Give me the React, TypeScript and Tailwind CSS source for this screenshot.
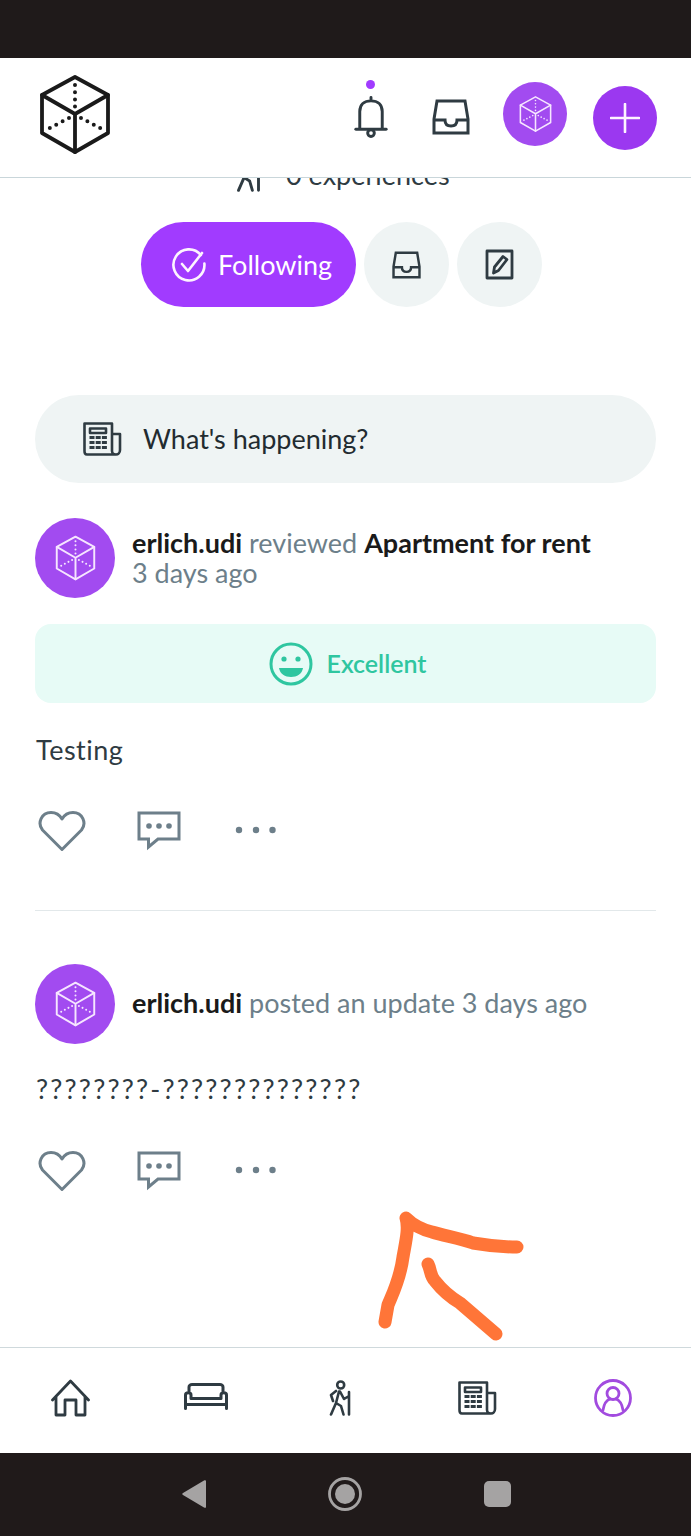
import React from "react";

const Cube = ({ className, stroke, sw = 4 }: { className: string; stroke: string; sw?: number }) => (
  <svg viewBox="0 0 72 81" className={className} fill="none" stroke={stroke} strokeWidth={sw} strokeLinejoin="round" strokeLinecap="round">
    <path d="M36 3 69 21V59L36 78 3 59V21Z" />
    <path d="M3 21 36 40 69 21M36 40V78" />
    <path d="M36 11V35M30 44 5 57M42 44 67 57" strokeDasharray="0 7.2" strokeWidth={sw * 1.05} />
  </svg>
);

const Bell = ({ className }: { className: string }) => (
  <svg viewBox="0 0 34 44" className={className} fill="none" stroke="#2f3b42" strokeWidth="3" strokeLinecap="round" strokeLinejoin="round">
    <path d="M17 2.500V5M5.500 34V17C5.500 10 10 6 17 6s11.500 4 11.500 11V34" />
    <path d="M1.500 35H32.500" />
    <circle cx="17" cy="39" r="3.400" />
  </svg>
);

const Inbox = ({ className, sw = 3 }: { className: string; sw?: number }) => (
  <svg viewBox="0 0 38 36" className={className} fill="none" stroke="#2f3b42" strokeWidth={sw} strokeLinejoin="miter">
    <path d="M5 2H33L36 20V34H2V20Z" />
    <path d="M2 21H13C13 25 15 27 19 27s6-2 6-6H36" />
  </svg>
);

const Pencil = ({ className }: { className: string }) => (
  <svg viewBox="0 0 29 31" className={className} fill="none" stroke="#2f3b42" strokeWidth="2.800" strokeLinejoin="round">
    <rect x="2" y="2" width="25" height="27" />
    <path d="M8.500 24 9.500 18 18 7.500 22 10.500 13.500 21.500Z" />
  </svg>
);

const News = ({ className }: { className: string }) => (
  <svg viewBox="0 0 39 34" className={className} fill="none" stroke="#2f3b42" strokeWidth="2.600" strokeLinejoin="round">
    <path d="M29 12H37V28C37 31 35 32.500 33 32.500H4C2 32.500 1.500 31 1.500 29V1.500H29V29C29 31 31 32.500 33 32.500" />
    <rect x="7" y="6.500" width="16" height="4.500" />
    <path d="M6.500 15.500H24M6.500 20.500H24M6.500 25.500H24" strokeWidth="3" strokeDasharray="5 1.200" />
  </svg>
);

const Hiker = ({ className }: { className: string }) => (
  <svg viewBox="0 0 24 36" className={className} fill="none" stroke="#2f3b42" strokeWidth="2.600" strokeLinecap="round" strokeLinejoin="round">
    <circle cx="12.700" cy="5" r="3.500" />
    <path d="M21 12V34.500M11 11.500 8 23 13 26 15.500 34.500M8 23 3 34.500M12 11.500 16 19 21 16M8 11 3 15 5 21" />
  </svg>
);

const Heart = () => (
  <svg viewBox="0 0 48 42" className="h-[42px] w-[48px]" fill="none" stroke="#6d7f8a" strokeWidth="3" strokeLinejoin="round">
    <path d="M24 39.500 4.500 20C-1 13 3.500 2.500 13 2.500 18 2.500 22 5.500 24 9 26 5.500 30 2.500 35 2.500 44.500 2.500 49 13 43.500 20Z" />
  </svg>
);

const Comment = () => (
  <svg viewBox="0 0 44 40" className="h-[40px] w-[44px]" fill="none">
    <path d="M2 2H42V28H21L11.500 36V28H2Z" stroke="#6d7f8a" strokeWidth="3" />
    <circle cx="12" cy="15" r="2.800" fill="#6d7f8a" />
    <circle cx="22" cy="15" r="2.800" fill="#6d7f8a" />
    <circle cx="32" cy="15" r="2.800" fill="#6d7f8a" />
  </svg>
);

const Dots = () => (
  <svg viewBox="0 0 42 8" className="mt-[-2px] h-[8px] w-[42px]" fill="#6d7f8a">
    <circle cx="4" cy="4" r="3.200" />
    <circle cx="21" cy="4" r="3.200" />
    <circle cx="37.500" cy="4" r="3.200" />
  </svg>
);

const Actions = () => (
  <div className="flex items-center">
    <Heart />
    <div className="ml-[51px]"><Comment /></div>
    <div className="ml-[54px]"><Dots /></div>
  </div>
);

const Avatar = () => (
  <div className="flex h-[80px] w-[80px] shrink-0 items-center justify-center rounded-full bg-[#a24bf0]">
    <Cube className="h-[46px] w-[41px]" stroke="#f6e6ff" sw={3.400} />
  </div>
);

export default function App() {
  return (
    <div className="relative flex h-[1536px] w-[691px] flex-col overflow-hidden bg-white font-['Lato','Noto_Sans',sans-serif] text-[27px]">
      <div className="h-[58px] shrink-0 bg-[#1f1a1a]" />

      <header className="flex h-[120px] shrink-0 items-start border-b border-[#c9d6da] bg-white pl-[39px] pr-[34px] pt-[16px]">
        <Cube className="h-[81px] w-[72px]" stroke="#1a1a1a" sw={3.800} />
        <div className="relative ml-auto mt-[8px] flex items-start">
          <div className="absolute left-[12px] top-[-2px] h-[9px] w-[9px] rounded-full bg-[#a13bff]" />
          <Bell className="mt-[13px] h-[43px] w-[34px]" />
          <Inbox className="ml-[44px] mt-[17px] h-[36px] w-[38px]" />
          <div className="ml-[33px] flex h-[64px] w-[64px] items-center justify-center rounded-full bg-[#a24bf0]">
            <Cube className="h-[38px] w-[33px]" stroke="#f6e6ff" sw={3.400} />
          </div>
          <div className="ml-[26px] mt-[4px] flex h-[64px] w-[64px] items-center justify-center rounded-full bg-[#9b38f0]">
            <svg viewBox="0 0 30 30" className="h-[30px] w-[30px]" stroke="#fdf4ff" strokeWidth="2.600" strokeLinecap="round">
              <path d="M15 1V29M1 15H29" />
            </svg>
          </div>
        </div>
      </header>

      <main className="flex-1 overflow-hidden">
        <div className="mt-[-19px] flex h-[32px] items-center pl-[235px] text-[#2f3b42]">
          <Hiker className="mt-[-6px] h-[40px] w-[27px]" />
          <span className="ml-[24px] leading-[32px]">0 experiences</span>
        </div>

        <div className="mt-[31px] flex justify-center gap-[8px] pr-[8px]">
          <div className="flex h-[85px] w-[215px] items-center rounded-full bg-[#a13bff] pl-[30px] text-white">
            <svg viewBox="0 0 36 36" className="h-[36px] w-[36px]" fill="none" stroke="#fdf4ff" strokeWidth="2.600" strokeLinecap="round" strokeLinejoin="round">
              <path d="M29.900 8A15.500 15.500 0 1 0 33.400 16.600" />
              <path d="M11 17 17 24 31 6" />
            </svg>
            <span className="ml-[11px] mt-[1px]">Following</span>
          </div>
          <div className="flex h-[85px] w-[85px] items-center justify-center rounded-full bg-[#eff4f4]">
            <Inbox className="h-[28px] w-[29px]" sw={3.200} />
          </div>
          <div className="flex h-[85px] w-[85px] items-center justify-center rounded-full bg-[#eff4f4]">
            <Pencil className="h-[31px] w-[29px]" />
          </div>
        </div>

        <div className="px-[35px]">
          <div className="mt-[88px] flex h-[88px] items-center rounded-full bg-[#eff4f4] pl-[48px] text-[#222b30]">
            <News className="h-[34px] w-[39px]" />
            <span className="ml-[21px] mt-[1px]">What's happening?</span>
          </div>

          <div className="mt-[35px] flex items-center">
            <Avatar />
            <div className="ml-[17px] leading-[30px] text-[#6d7f8a]">
              <div>
                <span className="font-bold text-[#1a1a1a]">erlich.udi</span> reviewed{" "}
                <span className="font-bold text-[#1a1a1a]">Apartment for rent</span>
              </div>
              <div>3 days ago</div>
            </div>
          </div>

          <div className="mt-[26px] flex h-[79px] items-center justify-center rounded-[16px] bg-[#e7fbf6] pl-[5px]">
            <svg viewBox="0 0 44 44" className="h-[44px] w-[44px]" fill="none">
              <circle cx="22" cy="22" r="20" stroke="#2fc6a0" strokeWidth="3" />
              <circle cx="15" cy="17" r="2.600" fill="#2fc6a0" />
              <circle cx="29" cy="17" r="2.600" fill="#2fc6a0" />
              <path d="M10 26H34C33 32 28 35 22 35S11 32 10 26Z" fill="#2fc6a0" />
            </svg>
            <span className="ml-[13px] text-[25px] font-semibold text-[#2fc6a0]">Excellent</span>
          </div>

          <div className="mt-[31px] pl-px leading-[32px] tracking-[0.5px] text-[#2f3b42]">Testing</div>

          <div className="mt-[44px] pl-[3px]"><Actions /></div>

          <div className="mt-[58px] h-px bg-[#e2e8ea]" />

          <div className="mt-[53px] flex items-center">
            <Avatar />
            <div className="ml-[17px] mt-[-2px] text-[#6d7f8a]">
              <span className="font-bold text-[#1a1a1a]">erlich.udi</span> posted an update 3 days ago
            </div>
          </div>

          <div className="mt-[29px] pl-px leading-[32px] tracking-[2.200px] text-[#2f3b42]">????????-??????????????</div>

          <div className="mt-[45px] pl-[3px]"><Actions /></div>
        </div>
      </main>

      <nav className="flex h-[106px] shrink-0 items-center border-t border-[#cfd9dc] bg-white pb-[5px]">
        <div className="flex w-full items-center pl-[51px]">
          <svg viewBox="0 0 39 38" className="h-[38px] w-[39px]" fill="none" stroke="#2f3b42" strokeWidth="2.800" strokeLinejoin="round" strokeLinecap="round">
            <path d="M1.500 21 19.500 2 37.500 21M5 18V36H14V21H25V36H34V18" />
          </svg>
          <svg viewBox="0 0 44 27" className="ml-[94px] mt-[-3px] h-[27px] w-[44px]" fill="none" stroke="#2f3b42" strokeWidth="3" strokeLinejoin="round" strokeLinecap="round">
            <path d="M5 9V4C5 2.500 6.500 1.500 8 1.500H36C37.500 1.500 39 2.500 39 4V9M1.500 25.500V12C1.500 9 7 9 7 12V15.500H37V12C37 9 42.500 9 42.500 12V25.500M1.500 21.500H42.500" />
          </svg>
          <Hiker className="ml-[100px] h-[36px] w-[24px]" />
          <News className="ml-[106px] h-[34px] w-[39px]" />
          <svg viewBox="0 0 38 38" className="ml-[97px] h-[38px] w-[38px]" fill="none" stroke="#a24bdf" strokeWidth="2.800" strokeLinecap="round">
            <circle cx="19" cy="19" r="17.500" />
            <circle cx="19" cy="14.500" r="6" />
            <path d="M9 31C10 25 13 21 16 20M29 31C28 25 25 21 22 20" />
          </svg>
        </div>
      </nav>

      <div className="flex h-[83px] shrink-0 items-center bg-[#201a1a] pb-[1px] pl-[182px]">
        <svg viewBox="0 0 24 28" className="h-[28px] w-[24px]" fill="#a5a3a3">
          <path d="M24 1V27C24 28 23 28 22 27.500L1 15C0 14.500 0 13.500 1 13L22 .5C23 0 24 0 24 1Z" />
        </svg>
        <svg viewBox="0 0 34 34" className="ml-[122px] h-[34px] w-[34px]" fill="#a5a3a3">
          <circle cx="17" cy="17" r="15.500" fill="none" stroke="#a5a3a3" strokeWidth="2.800" />
          <circle cx="17" cy="17" r="10" />
        </svg>
        <div className="ml-[122px] h-[26px] w-[27px] rounded-[5px] bg-[#a5a3a3]" />
      </div>

      <svg viewBox="0 0 691 1536" className="pointer-events-none absolute left-0 top-0 h-[1536px] w-[691px]" fill="none" stroke="#ff7538" strokeWidth="13" strokeLinecap="round" strokeLinejoin="round">
        <path d="M385 1322 388 1305C392 1295 400 1280 403 1257 406 1240 409 1228 406 1218 412 1224 420 1229 432 1232 445 1236 460 1238 473 1243 490 1246 505 1247 517 1247" />
        <path d="M428 1264C431 1270 430 1276 435 1281 442 1290 450 1297 460 1303L496 1334" />
      </svg>
    </div>
  );
}
